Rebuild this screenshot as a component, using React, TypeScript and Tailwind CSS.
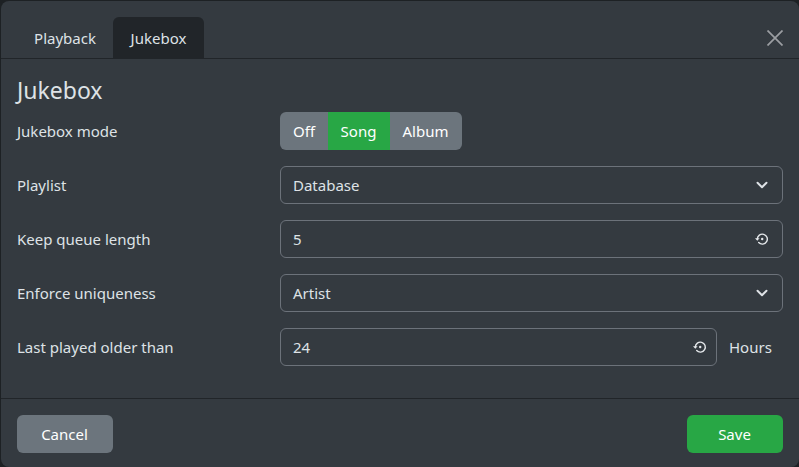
import React from "react";

const Chevron = () => (
  <svg width="12" height="12" viewBox="0 0 16 16" fill="none" stroke="#dee2e6" strokeWidth="2.6" strokeLinecap="round" strokeLinejoin="round" className="mr-px shrink-0">
    <path d="m2 5 6 6 6-6" />
  </svg>
);

const Reset = () => (
  <svg width="14" height="14" viewBox="0 0 14 14" fill="none" className="shrink-0">
    <path d="M2.3 7a5 5 0 1 1 1.4 3.6" stroke="#e4e7ea" strokeWidth="1.4" strokeLinecap="round" />
    <path d="M0 6.2h4.6L2.3 8.8z" fill="#e4e7ea" />
    <circle cx="7.2" cy="7" r="1.2" fill="#e4e7ea" />
  </svg>
);

const Row = ({ label, children }: { label: string; children: React.ReactNode }) => (
  <div className="flex h-[38px] items-center">
    <div className="w-[263px] shrink-0">{label}</div>
    {children}
  </div>
);

const Field = ({ value, icon, className }: { value: string; icon: React.ReactNode; className: string }) => (
  <div className={`flex h-[38px] items-center justify-between rounded-md border border-[#6c727a] pl-3 ${className}`}>
    <span>{value}</span>
    {icon}
  </div>
);

export default function App() {
  return (
    <div className="h-[467px] w-[799px] overflow-hidden bg-[#1d2124] pl-px pt-px font-['Noto_Sans',sans-serif] text-[15px] leading-6 text-[#dee2e6]">
      <div className="flex h-full w-full flex-col rounded-lg bg-[#343a40]">
        <div className="flex h-[58px] shrink-0 items-end justify-between border-b border-[#212529] pl-4 pr-[16px]">
          <div className="flex h-[41px]">
            <div className="flex w-[96px] items-center justify-center">Playback</div>
            <div className="flex w-[91px] items-center justify-center rounded-t-md bg-[#212529]">Jukebox</div>
          </div>
          <svg width="16" height="16" viewBox="0 0 16 16" className="mb-[12px]" fill="none" stroke="#9b9ea2" strokeWidth="1.7">
            <path d="M0.5 0.5l15 15M15.5 0.5l-15 15" />
          </svg>
        </div>
        <div className="flex flex-1 flex-col px-4">
          <h2 className="mt-[13px] mb-[4px] text-[23px] leading-[36px]">Jukebox</h2>
          <div className="flex flex-col gap-4">
            <Row label="Jukebox mode">
              <div className="flex h-[38px] overflow-hidden rounded-md text-white">
                <div className="flex w-[48px] items-center justify-center bg-[#6c757d]">Off</div>
                <div className="flex w-[62px] items-center justify-center bg-[#28a745] pr-px">Song</div>
                <div className="flex w-[72px] items-center justify-center bg-[#6c757d] pr-px">Album</div>
              </div>
            </Row>
            <Row label="Playlist"><Field value="Database" icon={<Chevron />} className="w-[503px] pr-[13px]" /></Row>
            <Row label="Keep queue length"><Field value="5" icon={<Reset />} className="w-[503px] pr-[13px]" /></Row>
            <Row label="Enforce uniqueness"><Field value="Artist" icon={<Chevron />} className="w-[503px] pr-[13px]" /></Row>
            <Row label="Last played older than">
              <Field value="24" icon={<Reset />} className="w-[437px] pr-[9px]" />
              <span className="ml-3">Hours</span>
            </Row>
          </div>
        </div>
        <div className="flex h-[69px] shrink-0 items-start justify-between border-t border-[#212529] px-4 pt-4 text-white">
          <div className="flex h-[38px] w-[96px] items-center justify-center rounded-md bg-[#6c757d] pr-px">Cancel</div>
          <div className="flex h-[38px] w-[96px] items-center justify-center rounded-md bg-[#28a745] pr-px">Save</div>
        </div>
      </div>
    </div>
  );
}
